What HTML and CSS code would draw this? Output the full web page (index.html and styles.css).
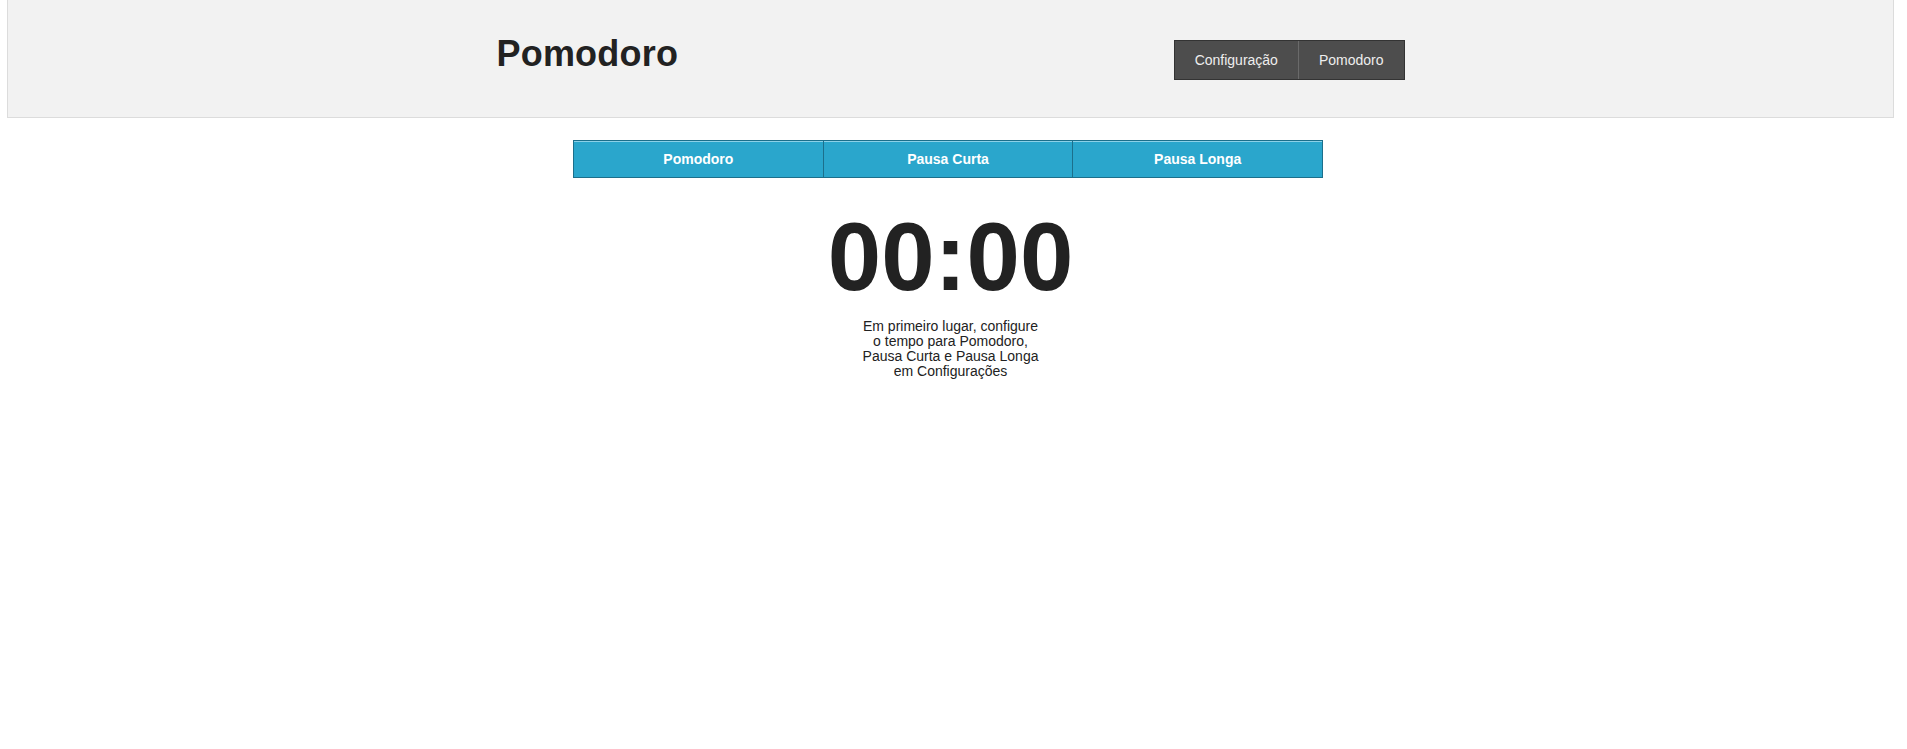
FILE: index.html
```html
<!DOCTYPE html>
<html lang="pt-BR">
<head>
<meta charset="utf-8">
<title>Pomodoro</title>
<link rel="stylesheet" href="styles.css">
</head>
<body>
<header class="site-header">
  <div class="header-inner">
    <h1 class="brand">Pomodoro</h1>
    <nav class="menu">
      <a class="menu-item" href="#">Configuração</a>
      <a class="menu-item" href="#">Pomodoro</a>
    </nav>
  </div>
</header>
<main class="main">
  <div class="tabs">
    <button class="tab">Pomodoro</button>
    <button class="tab">Pausa Curta</button>
    <button class="tab">Pausa Longa</button>
  </div>
  <div class="timer">00:00</div>
  <p class="hint">Em primeiro lugar, configure<br>o tempo para Pomodoro,<br>Pausa Curta e Pausa Longa<br>em Configurações</p>
</main>
</body>
</html>
```

FILE: styles.css
```css
* { box-sizing: border-box; }

body {
  margin: 0 13px 0 7px;
  font-family: "Liberation Sans", Arial, sans-serif;
  color: #222;
  background: #fff;
}

.site-header {
  height: 118px;
  background: #f2f2f2;
  border: 1px solid #dcdcdc;
  border-top: none;
  padding-top: 33px;
}

.header-inner {
  width: 908px;
  margin: 0 auto;
  display: flex;
  justify-content: space-between;
  align-items: flex-start;
}

.brand {
  margin: 0;
  font-size: 36px;
  font-weight: bold;
  line-height: normal;
  letter-spacing: 0.2px;
  color: #222;
}

.menu {
  display: flex;
  margin-top: 7px;
  border: 1px solid #333;
  background: #4d4d4d;
}

.menu-item {
  display: block;
  padding: 11px 20px;
  font-size: 14px;
  line-height: 16px;
  color: #eee;
  text-decoration: none;
  background: #4d4d4d;
}

.menu-item + .menu-item {
  border-left: 1px solid #6a6a6a;
}

.main {
  display: flex;
  flex-direction: column;
  align-items: center;
}

.tabs {
  display: flex;
  width: 750px;
  margin: 22px 5px 0 0;
  border: 1px solid #1c6f8b;
  background: #2aa6cc;
  box-shadow: inset 0 1px 0 #8bd1e8;
}

.tab {
  flex: 1;
  margin: 0;
  padding: 10px 0;
  border: none;
  background: transparent;
  font-family: "Liberation Sans", Arial, sans-serif;
  font-size: 14px;
  font-weight: bold;
  line-height: 16px;
  color: #fff;
  cursor: pointer;
}

.tab + .tab {
  border-left: 1px solid #1c6f8b;
}

.timer {
  margin-top: 24px;
  font-size: 96px;
  font-weight: bold;
  line-height: normal;
  color: #222;
}

.hint {
  margin: 7px 0 0;
  font-size: 14px;
  line-height: 15px;
  text-align: center;
  color: #222;
}
```
